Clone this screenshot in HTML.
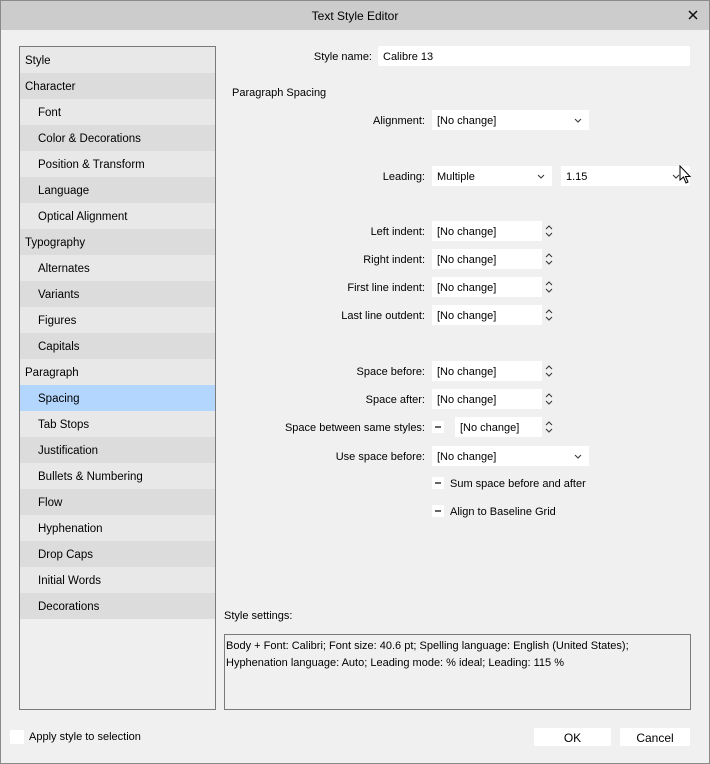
<!DOCTYPE html><html><head><style>
*{margin:0;padding:0;box-sizing:border-box}
body{width:710px;height:764px;background:#f0f0f0;font-family:"Liberation Sans",sans-serif;font-size:11px;color:#000;position:relative;overflow:hidden}
.a{position:absolute}
.win{left:0;top:0;width:710px;height:764px;border:1px solid #8a8a8a}
.title{left:1px;top:1px;width:708px;height:29px;background:#cccccc;text-align:center;line-height:30px;font-size:12px}
.list{left:19px;top:46px;width:197px;height:664px;border:1px solid #7a7a7a;background:#efefef}
.row{height:26px;line-height:29px;padding-left:5px;white-space:nowrap;font-size:11.5px}
.l{background:#e8e8e8}.d{background:#dcdcdc}.s{background:#b3d6ff}
.i{padding-left:18px}
.lab{text-align:right;white-space:nowrap;line-height:22px}
.in{background:#fff;height:20px;line-height:22px;padding-left:5px;white-space:nowrap}
.chev{position:absolute;right:7px;top:4px}
.cb{width:12px;height:12px;background:#fff}
.cb::after{content:"";position:absolute;left:3px;top:5px;width:6px;height:2px;background:#666}
.btn{background:#fff;height:18px;line-height:20px;text-align:center;font-size:12px}
</style></head><body>
<div class="a win"></div>
<div class="a title">Text Style Editor</div>
<svg class="a" style="left:688px;top:10px" width="10" height="10"><path d="M1 1L9 9M9 1L1 9" stroke="#111" stroke-width="1.5"/></svg>
<div class="a list">
<div class="row l">Style</div><div class="row d">Character</div><div class="row l i">Font</div><div class="row d i">Color &amp; Decorations</div><div class="row l i">Position &amp; Transform</div><div class="row d i">Language</div><div class="row l i">Optical Alignment</div><div class="row d">Typography</div><div class="row l i">Alternates</div><div class="row d i">Variants</div><div class="row l i">Figures</div><div class="row d i">Capitals</div><div class="row l">Paragraph</div><div class="row s i">Spacing</div><div class="row l i">Tab Stops</div><div class="row d i">Justification</div><div class="row l i">Bullets &amp; Numbering</div><div class="row d i">Flow</div><div class="row l i">Hyphenation</div><div class="row d i">Drop Caps</div><div class="row l i">Initial Words</div><div class="row d i">Decorations</div>
</div>
<div class="a lab" style="right:338px;top:46px">Style name:</div>
<div class="a in" style="left:378px;top:46px;width:312px;border-radius:2px">Calibre 13</div>
<div class="a" style="left:232px;top:87px">Paragraph Spacing</div>

<div class="a lab" style="right:285px;top:110px">Alignment:</div>
<div class="a in" style="left:432px;top:110px;width:157px">[No change]<svg class="chev" width="8" height="12"><path d="M1 5L4 8L7 5" fill="none" stroke="#333"/></svg></div>

<div class="a lab" style="right:285px;top:166px">Leading:</div>
<div class="a in" style="left:432px;top:166px;width:120px">Multiple<svg class="chev" width="8" height="12"><path d="M1 5L4 8L7 5" fill="none" stroke="#333"/></svg></div>
<div class="a in" style="left:561px;top:166px;width:129px">1.15<svg class="chev" style="right:10px" width="8" height="12"><path d="M1 5L4 8L7 5" fill="none" stroke="#333"/></svg></div>
<svg class="a" style="left:679px;top:165px" width="14" height="20"><path d="M1 1L1 15L4.5 12L7 18L9 17L6.5 11.5L11 11.5Z" fill="#fff" stroke="#000"/></svg>

<div class="a lab" style="right:285px;top:221px">Left indent:</div>
<div class="a lab" style="right:285px;top:249px">Right indent:</div>
<div class="a lab" style="right:285px;top:277px">First line indent:</div>
<div class="a lab" style="right:285px;top:305px">Last line outdent:</div>
<div class="a lab" style="right:285px;top:361px">Space before:</div>
<div class="a lab" style="right:285px;top:389px">Space after:</div>
<div class="a lab" style="right:285px;top:417px">Space between same styles:</div>
<div class="a lab" style="right:285px;top:446px">Use space before:</div>

<div class="a in" style="left:432px;top:221px;width:110px">[No change]</div>
<div class="a in" style="left:432px;top:249px;width:110px">[No change]</div>
<div class="a in" style="left:432px;top:277px;width:110px">[No change]</div>
<div class="a in" style="left:432px;top:305px;width:110px">[No change]</div>
<div class="a in" style="left:432px;top:361px;width:110px">[No change]</div>
<div class="a in" style="left:432px;top:389px;width:110px">[No change]</div>
<div class="a in" style="left:455px;top:417px;width:87px">[No change]</div>
<div class="a in" style="left:432px;top:446px;width:157px">[No change]<svg class="chev" width="8" height="12"><path d="M1 5L4 8L7 5" fill="none" stroke="#333"/></svg></div>

<svg class="a" style="left:544px;top:223px" width="10" height="16"><path d="M2 6L5 3L8 6M2 10L5 13L8 10" fill="none" stroke="#333"/></svg>
<svg class="a" style="left:544px;top:251px" width="10" height="16"><path d="M2 6L5 3L8 6M2 10L5 13L8 10" fill="none" stroke="#333"/></svg>
<svg class="a" style="left:544px;top:279px" width="10" height="16"><path d="M2 6L5 3L8 6M2 10L5 13L8 10" fill="none" stroke="#333"/></svg>
<svg class="a" style="left:544px;top:307px" width="10" height="16"><path d="M2 6L5 3L8 6M2 10L5 13L8 10" fill="none" stroke="#333"/></svg>
<svg class="a" style="left:544px;top:363px" width="10" height="16"><path d="M2 6L5 3L8 6M2 10L5 13L8 10" fill="none" stroke="#333"/></svg>
<svg class="a" style="left:544px;top:391px" width="10" height="16"><path d="M2 6L5 3L8 6M2 10L5 13L8 10" fill="none" stroke="#333"/></svg>
<svg class="a" style="left:544px;top:419px" width="10" height="16"><path d="M2 6L5 3L8 6M2 10L5 13L8 10" fill="none" stroke="#333"/></svg>

<div class="a cb" style="left:432px;top:421px"></div>
<div class="a cb" style="left:432px;top:477px"></div>
<div class="a" style="left:450px;top:478px">Sum space before and after</div>
<div class="a cb" style="left:432px;top:505px"></div>
<div class="a" style="left:450px;top:506px">Align to Baseline Grid</div>

<div class="a" style="left:224px;top:610px">Style settings:</div>
<div class="a" style="left:224px;top:634px;width:467px;height:76px;border:1px solid #7a7a7a;padding:3px 1px;line-height:17px">Body + Font: Calibri; Font size: 40.6 pt; Spelling language: English (United States); Hyphenation language: Auto; Leading mode: % ideal; Leading: 115 %</div>

<div class="a" style="left:10px;top:730px;width:14px;height:14px;background:#fff"></div>
<div class="a" style="left:29px;top:731px">Apply style to selection</div>
<div class="a btn" style="left:534px;top:728px;width:77px">OK</div>
<div class="a btn" style="left:620px;top:728px;width:70px">Cancel</div>
</body></html>
